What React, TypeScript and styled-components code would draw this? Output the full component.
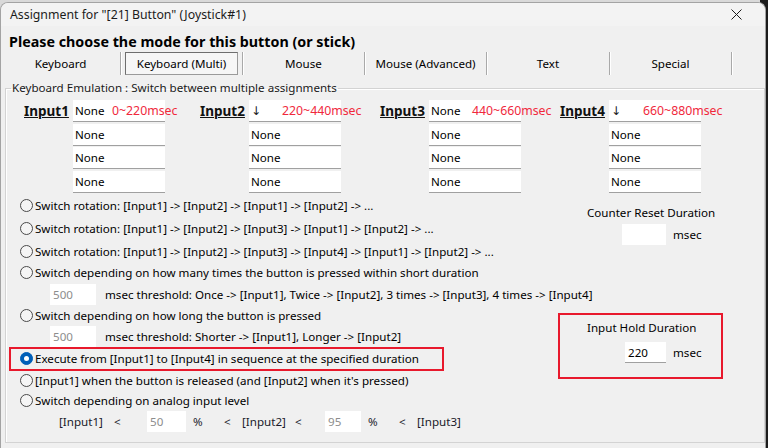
import React from 'react'
import styled, { createGlobalStyle } from 'styled-components'

const GlobalStyle = createGlobalStyle`
  html, body {
    margin: 0;
    padding: 0;
  }
  body {
    width: 768px;
    height: 448px;
    overflow: hidden;
    background: linear-gradient(90deg, #d9d9d9 0, #d9d9d9 760px, #1c1c1c 760px);
    font-family: 'Noto Sans', 'Segoe UI', sans-serif;
    font-size: 11.6px;
    color: #000;
  }
`

const Window = styled.div`
  margin-top: 2px;
  width: 766px;
  height: 446px;
  box-sizing: border-box;
  background: #f0f0f0;
  border: 1px solid #a3a3a3;
  border-bottom: none;
  border-radius: 8px 8px 0 0;
  display: flex;
  flex-direction: column;
  overflow: hidden;
`

const TitleBar = styled.div`
  height: 23px;
  display: flex;
  align-items: center;
  justify-content: space-between;
  padding-left: 9px;
  background: #f3f3f3;
  color: #1b1b1b;
  font-size: 12.3px;
`

const CloseButton = styled.div`
  width: 46px;
  height: 23px;
  margin-right: 6px;
  display: flex;
  align-items: center;
  justify-content: center;
`

const Heading = styled.div`
  margin-top: 6px;
  padding-left: 8px;
  height: 20px;
  line-height: 20px;
  font-size: 14.3px;
  font-weight: 700;
`

const TabRow = styled.div`
  display: flex;
  height: 23px;
`

const Tab = styled.div<{ $w: number }>`
  width: ${({ $w }) => $w}px;
  box-sizing: border-box;
  border-right: 1px solid #a9a9a9;
  box-shadow: 1px 0 0 #ffffff;
  padding: 0 4px;
  display: flex;
  align-items: stretch;
`

const TabFace = styled.div<{ $active?: boolean }>`
  flex: 1;
  display: flex;
  align-items: center;
  justify-content: center;
  box-sizing: border-box;
  border: 1px solid ${({ $active }) => ($active ? '#9a9a9a' : 'transparent')};
  border-top-color: ${({ $active }) => ($active ? '#6e6e6e' : 'transparent')};
  border-left-color: ${({ $active }) => ($active ? '#6e6e6e' : 'transparent')};
  background: ${({ $active }) => ($active ? '#f6f6f6' : 'transparent')};
`

const Group = styled.fieldset`
  margin: 5px 0 0 4px;
  padding: 0;
  width: 760px;
  height: 363px;
  box-sizing: border-box;
  border: 1px solid #d3d3d3;
  box-shadow: inset 1px 1px 0 #ffffff;
  min-width: 0;
`

const Legend = styled.legend`
  margin-left: 5px;
  padding: 0 1px;
  line-height: 16px;
  color: #1a1a1a;
`

const InputGrid = styled.div`
  margin-top: 4px;
  padding-left: 18px;
  display: grid;
  grid-template-columns: 176px 180px 180px 180px;
`

const InputCol = styled.div`
  display: flex;
`

const InputLabel = styled.div`
  width: 49px;
  height: 22px;
  line-height: 22px;
  font-size: 13.5px;
  font-weight: 700;
  text-decoration: underline;
  color: #111;
`

const BoxStack = styled.div`
  display: flex;
  flex-direction: column;
  gap: 1.5px;
`

const KeyBox = styled.div`
  position: relative;
  width: 92px;
  height: 22px;
  box-sizing: border-box;
  padding-left: 2px;
  line-height: 21px;
  background: #ffffff;
  border-bottom: 1px solid #a0a0a0;
  white-space: nowrap;
`

const Arrow = styled.span`
  font-family: 'DejaVu Sans', sans-serif;
  font-size: 12px;
  color: #1a1a1a;
`

const RangeNote = styled.span<{ $left: number }>`
  position: absolute;
  top: 0;
  left: ${({ $left }) => $left}px;
  line-height: 21px;
  font-size: 12.3px;
  color: #f0283c;
`

const Lower = styled.div`
  margin-top: 2px;
  display: flex;
`

const LeftCol = styled.div`
  width: 552px;
  padding-left: 14px;
  box-sizing: border-box;
  display: flex;
  flex-direction: column;
  white-space: nowrap;
`

const Row = styled.div<{ $h: number; $indent?: number }>`
  height: ${({ $h }) => $h}px;
  display: flex;
  align-items: center;
  padding-left: ${({ $indent }) => $indent ?? 0}px;
`

const HighlightRow = styled.div`
  height: 24px;
  width: 435px;
  margin-left: -11px;
  padding-left: 9px;
  box-sizing: border-box;
  border: 2px solid #e8192c;
  display: flex;
  align-items: center;
`

const Radio = styled.span<{ $checked?: boolean }>`
  width: 13px;
  height: 13px;
  box-sizing: border-box;
  border-radius: 50%;
  flex-shrink: 0;
  margin-right: 2px;
  border: 1px solid ${({ $checked }) => ($checked ? '#005fb8' : '#4a4a4a')};
  background: ${({ $checked }) => ($checked ? '#005fb8' : '#f5f5f5')};
  display: flex;
  align-items: center;
  justify-content: center;

  &::after {
    content: '';
    width: 5px;
    height: 5px;
    border-radius: 50%;
    background: #ffffff;
    display: ${({ $checked }) => ($checked ? 'block' : 'none')};
  }
`

const NumBox = styled.div<{ $w: number; $dim?: boolean; $line?: boolean }>`
  width: ${({ $w }) => $w}px;
  height: 21px;
  box-sizing: border-box;
  padding-left: 3px;
  line-height: 21px;
  background: #ffffff;
  color: ${({ $dim }) => ($dim ? '#8d8d8d' : '#000')};
  border-bottom: ${({ $line }) => ($line ? '1px solid #a0a0a0' : 'none')};
  flex-shrink: 0;
`

const Note = styled.span<{ $ml?: number }>`
  margin-left: ${({ $ml }) => $ml ?? 0}px;
`

const AnalogRow = styled.div`
  height: 22px;
  padding-left: 39px;
  display: grid;
  grid-template-columns: 55px 33px 46px 31px 18px 53px 30px 43px 31px 18px auto;
  align-items: center;
  color: #1a1a2a;
`

const RightCol = styled.div`
  width: 166px;
  display: flex;
  flex-direction: column;
`

const CounterLabel = styled.div`
  margin-top: 10px;
  padding-left: 29px;
  line-height: 16px;
  white-space: nowrap;
`

const FieldRow = styled.div<{ $pl: number; $mt: number }>`
  margin-top: ${({ $mt }) => $mt}px;
  padding-left: ${({ $pl }) => $pl}px;
  display: flex;
  align-items: center;
  gap: 7px;
`

const HoldBox = styled.div`
  margin-top: 68px;
  width: 165px;
  height: 66px;
  box-sizing: border-box;
  border: 2px solid #e8192c;
  padding: 5px 0 0 27px;
`

const HoldLabel = styled.div`
  line-height: 16px;
  white-space: nowrap;
`

const tabs = [
  { label: 'Keyboard', w: 120 },
  { label: 'Keyboard (Multi)', w: 122, active: true },
  { label: 'Mouse', w: 122 },
  { label: 'Mouse (Advanced)', w: 122 },
  { label: 'Text', w: 123 },
  { label: 'Special', w: 122 },
]

const inputs = [
  { name: 'Input1', first: 'None', note: '0~220msec', left: 39 },
  { name: 'Input2', first: '↓', note: '220~440msec', left: 33 },
  { name: 'Input3', first: 'None', note: '440~660msec', left: 43 },
  { name: 'Input4', first: '↓', note: '660~880msec', left: 34 },
]

const CloseIcon = () => (
  <svg width="11" height="11" viewBox="0 0 11 11">
    <path d="M0.5 0.5 L10.5 10.5 M10.5 0.5 L0.5 10.5" stroke="#1b1b1b" strokeWidth="1" />
  </svg>
)

const App: React.FC = () => {
  return (
    <>
      <GlobalStyle />
      <Window>
        <TitleBar>
          <span>Assignment for "[21] Button" (Joystick#1)</span>
          <CloseButton>
            <CloseIcon />
          </CloseButton>
        </TitleBar>
        <Heading>Please choose the mode for this button (or stick)</Heading>
        <TabRow>
          {tabs.map((t) => (
            <Tab key={t.label} $w={t.w}>
              <TabFace $active={t.active}>{t.label}</TabFace>
            </Tab>
          ))}
        </TabRow>
        <Group>
          <Legend>Keyboard Emulation : Switch between multiple assignments</Legend>
          <InputGrid>
            {inputs.map((inp) => (
              <InputCol key={inp.name}>
                <InputLabel>{inp.name}</InputLabel>
                <BoxStack>
                  <KeyBox>
                    {inp.first === '↓' ? <Arrow>↓</Arrow> : inp.first}
                    <RangeNote $left={inp.left}>{inp.note}</RangeNote>
                  </KeyBox>
                  <KeyBox>None</KeyBox>
                  <KeyBox>None</KeyBox>
                  <KeyBox>None</KeyBox>
                </BoxStack>
              </InputCol>
            ))}
          </InputGrid>
          <Lower>
            <LeftCol>
              <Row $h={22.5}>
                <Radio />
                Switch rotation: [Input1] -&gt; [Input2] -&gt; [Input1] -&gt; [Input2] -&gt; ...
              </Row>
              <Row $h={23}>
                <Radio />
                Switch rotation: [Input1] -&gt; [Input2] -&gt; [Input3] -&gt; [Input1] -&gt; [Input2] -&gt; ...
              </Row>
              <Row $h={22}>
                <Radio />
                Switch rotation: [Input1] -&gt; [Input2] -&gt; [Input3] -&gt; [Input4] -&gt; [Input1] -&gt; [Input2] -&gt; ...
              </Row>
              <Row $h={21.5}>
                <Radio />
                Switch depending on how many times the button is pressed within short duration
              </Row>
              <Row $h={21.5} $indent={30}>
                <NumBox $w={46} $dim>500</NumBox>
                <Note $ml={9}>
                  msec threshold: Once -&gt; [Input1], Twice -&gt; [Input2], 3 times -&gt; [Input3], 4 times -&gt; [Input4]
                </Note>
              </Row>
              <Row $h={21}>
                <Radio />
                Switch depending on how long the button is pressed
              </Row>
              <Row $h={20.5} $indent={30}>
                <NumBox $w={46} $dim>500</NumBox>
                <Note $ml={9}>msec threshold: Shorter -&gt; [Input1], Longer -&gt; [Input2]</Note>
              </Row>
              <HighlightRow>
                <Radio $checked />
                Execute from [Input1] to [Input4] in sequence at the specified duration
              </HighlightRow>
              <Row $h={19.5}>
                <Radio />
                [Input1] when the button is released (and [Input2] when it's pressed)
              </Row>
              <Row $h={20.5}>
                <Radio />
                Switch depending on analog input level
              </Row>
              <AnalogRow>
                <span>[Input1]</span>
                <span>&lt;</span>
                <NumBox $w={39} $dim>50</NumBox>
                <span>%</span>
                <span>&lt;</span>
                <span>[Input2]</span>
                <span>&lt;</span>
                <NumBox $w={36} $dim>95</NumBox>
                <span>%</span>
                <span>&lt;</span>
                <span>[Input3]</span>
              </AnalogRow>
            </LeftCol>
            <RightCol>
              <CounterLabel>Counter Reset Duration</CounterLabel>
              <FieldRow $pl={64} $mt={3}>
                <NumBox $w={44} />
                <span>msec</span>
              </FieldRow>
              <HoldBox>
                <HoldLabel>Input Hold Duration</HoldLabel>
                <FieldRow $pl={38} $mt={6}>
                  <NumBox $w={41} $line>220</NumBox>
                  <span>msec</span>
                </FieldRow>
              </HoldBox>
            </RightCol>
          </Lower>
        </Group>
      </Window>
    </>
  )
}

export default App
